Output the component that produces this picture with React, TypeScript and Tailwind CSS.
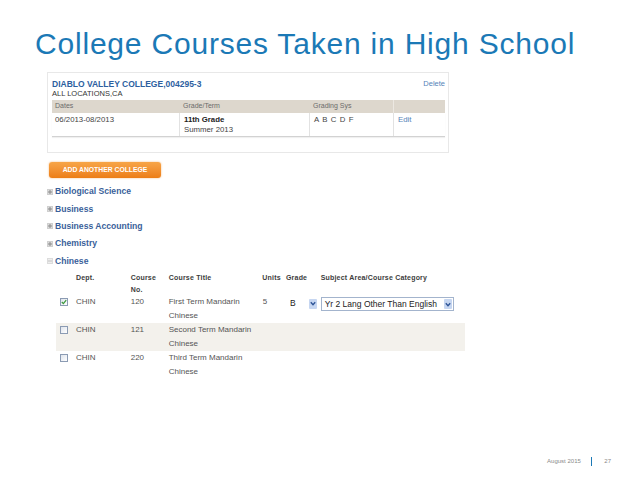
import React from "react"

const categories = [
  { name: "Biological Science", open: false },
  { name: "Business", open: false },
  { name: "Business Accounting", open: false },
  { name: "Chemistry", open: false },
  { name: "Chinese", open: true },
]

const courses = [
  { dept: "CHIN", no: "120", title: ["First Term Mandarin", "Chinese"], checked: true, units: "5" },
  { dept: "CHIN", no: "121", title: ["Second Term Mandarin", "Chinese"], checked: false },
  { dept: "CHIN", no: "220", title: ["Third Term Mandarin", "Chinese"], checked: false },
]

const Checkbox = ({ checked }: { checked: boolean }) => (
  <div className="w-[8px] h-[8px] mt-[3px] border border-[#8b9bb3] bg-gradient-to-br from-[#dfe4ec] to-white flex items-center justify-center">
    {checked && (
      <svg width="6" height="6" viewBox="0 0 6 6">
        <path d="M0.8 3 L2.4 4.6 L5.2 1.2" fill="none" stroke="#3c9a3c" strokeWidth="1.3" />
      </svg>
    )}
  </div>
)

const Arrow = () => (
  <div className="w-[8px] h-[10px] bg-[#c6d6f1] rounded-[1px] flex items-center justify-center">
    <svg width="6" height="5" viewBox="0 0 6 5">
      <path d="M0.8 1.2 L3 3.6 L5.2 1.2" fill="none" stroke="#2f5597" strokeWidth="1.4" />
    </svg>
  </div>
)

const ExpandIcon = ({ open }: { open: boolean }) => (
  <div className={`w-[6px] h-[6px] flex items-center justify-center ${open ? "bg-[#eeeeee] border border-[#dcdcdc]" : "bg-[#dedede] border border-[#cfcfcf]"}`}>
    <svg width="4" height="4" viewBox="0 0 4 4">
      <path d="M0 2 H4" stroke={open ? "#c4c4c4" : "#8a8a8a"} strokeWidth="1" />
      {!open && <path d="M2 0 V4" stroke="#8a8a8a" strokeWidth="1" />}
    </svg>
  </div>
)

export default function App() {
  return (
    <div className="w-[638px] h-[479px] bg-white flex flex-col overflow-hidden font-['Liberation_Sans',Arial,sans-serif]">
      {/* Slide title */}
      <h1 className="ml-[35px] mt-[29px] text-[30px] leading-[30px] tracking-[0.8px] text-[#1b79b6] whitespace-nowrap">
        College Courses Taken in High School
      </h1>

      {/* College card */}
      <div className="ml-[47px] mt-[13px] w-[402px] h-[81px] border border-[#e8e8e8] pt-[6px]">
        <div className="flex justify-between pl-[4px] pr-[3px]">
          <div>
            <div className="text-[8.5px] leading-[10px] font-bold text-[#2d5f9f]">DIABLO VALLEY COLLEGE,004295-3</div>
            <div className="text-[7.5px] leading-[10px] text-[#333]">ALL LOCATIONS,CA</div>
          </div>
          <div className="text-[7.5px] leading-[10px] text-[#5583b8]">Delete</div>
        </div>

        <div className="ml-[4px] mt-[1px] w-[393px]">
          <div className="flex h-[13px] items-center bg-[#ddd7cd] text-[7px] text-[#6b6b6b]">
            <div className="w-[127px] pl-[3px]">Dates</div>
            <div className="w-[130px] pl-[4px]">Grade/Term</div>
            <div className="w-[84px] pl-[4px]">Grading Sys</div>
            <div className="flex-1 h-full border-l border-[#ece8e2]" />
          </div>
          <div className="flex h-[24px] text-[7.8px] leading-[10px] text-[#444] border-b border-[#d2d2d2] shadow-[0_1px_1px_rgba(0,0,0,0.06)]">
            <div className="w-[127px] pl-[3px] pt-[2px]">06/2013-08/2013</div>
            <div className="w-[130px] pl-[4px] pt-[2px] border-l border-[#e2e2e2]">
              <div className="font-bold text-[#222]">11th Grade</div>
              <div>Summer 2013</div>
            </div>
            <div className="w-[84px] pl-[4px] pt-[2px] border-l border-[#e2e2e2] tracking-[0.6px]">A B C D F</div>
            <div className="flex-1 pl-[4px] pt-[2px] border-l border-[#e2e2e2] text-[#5583b8]">Edit</div>
          </div>
        </div>
      </div>

      {/* Add button */}
      <div className="ml-[49px] mt-[9px] w-[112px] h-[16px] rounded-[3px] bg-gradient-to-b from-[#f7a547] to-[#ec7e14] shadow-[0_0_2px_rgba(236,126,20,0.6)] flex items-center justify-center text-[6.8px] font-bold text-white">
        ADD ANOTHER COLLEGE
      </div>

      {/* Subject categories */}
      <div className="ml-[47px] mt-[5px]">
        {categories.map((c) => (
          <div key={c.name} className="flex items-center gap-[2px] h-[17.4px]">
            <ExpandIcon open={c.open} />
            <span className="text-[8.6px] font-bold text-[#3a5f9a]">{c.name}</span>
          </div>
        ))}
      </div>

      {/* Courses table */}
      <div className="ml-[56px] mt-[2px] w-[409px]">
        <div className="flex text-[7px] leading-[11.7px] font-bold text-[#3d3d3d] tracking-[0.2px]">
          <div className="w-[20px]" />
          <div className="w-[54.7px]">Dept.</div>
          <div className="w-[38px]">Course<br />No.</div>
          <div className="w-[93.6px]">Course Title</div>
          <div className="w-[23.7px]">Units</div>
          <div className="w-[34.7px]">Grade</div>
          <div className="flex-1">Subject Area/Course Category</div>
        </div>

        {courses.map((c, i) => (
          <div key={c.no} className={`flex h-[28px] text-[8px] leading-[13.5px] text-[#555] ${i === 1 ? "bg-[#f3f1ec]" : ""}`}>
            <div className="w-[20px] pl-[4px]">
              <Checkbox checked={c.checked} />
            </div>
            <div className="w-[54.7px]">{c.dept}</div>
            <div className="w-[38px]">{c.no}</div>
            <div className="w-[93.6px]">
              {c.title[0]}
              <br />
              {c.title[1]}
            </div>
            <div className="w-[23.7px] pl-[0.5px]">{c.units}</div>
            {c.units && (
              <>
                <div className="w-[34.7px] pt-[2px]">
                  <div className="w-[32px] h-[13px] flex items-center justify-between pl-[4px] pr-[1px] bg-white text-[8.5px] text-[#222]">
                    B
                    <Arrow />
                  </div>
                </div>
                <div className="flex-1 pt-[2px]">
                  <div className="w-[133px] h-[14px] border border-[#a3b4cd] flex items-center justify-between pl-[3px] pr-[1px] text-[8.5px] text-[#222] whitespace-nowrap">
                    Yr 2 Lang Other Than English
                    <Arrow />
                  </div>
                </div>
              </>
            )}
          </div>
        ))}
      </div>

      {/* Footer */}
      <div className="mt-auto mb-[13px] pr-[27px] flex justify-end items-center h-[10px] text-[6px] text-[#8a8a8a]">
        <span>August 2015</span>
        <div className="ml-[10px] w-[1.5px] h-[9px] bg-[#1b79b6]" />
        <span className="ml-[12px]">27</span>
      </div>
    </div>
  )
}
